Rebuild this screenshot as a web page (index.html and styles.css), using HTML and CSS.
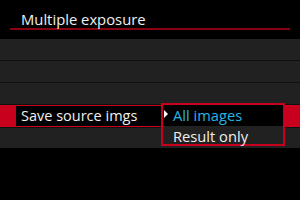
FILE: index.html
```html
<!DOCTYPE html>
<html>
<head>
<meta charset="utf-8">
<link rel="stylesheet" href="styles.css">
</head>
<body>
<div class="screen">
  <div class="header">
    <div class="title">Multiple exposure</div>
  </div>
  <div class="menu">
    <div class="row"></div>
    <div class="row"></div>
    <div class="row"></div>
    <div class="row selected">
      <div class="label">Save source imgs</div>
    </div>
    <div class="row"></div>
  </div>
  <div class="dropdown">
    <div class="opt active"><span class="marker"></span>All images</div>
    <div class="opt">Result only</div>
  </div>
</div>
</body>
</html>
```
FILE: styles.css
```css
html, body {
  margin: 0;
  padding: 0;
  background: #000;
}
.screen {
  position: relative;
  width: 300px;
  height: 200px;
  background: #000;
  overflow: hidden;
  font-family: "Open Sans", "Noto Sans", sans-serif;
  color: #f0f0f0;
}
.header {
  height: 39px;
  padding: 0 10px;
  box-sizing: border-box;
}
.title {
  height: 18px;
  padding-top: 10px;
  padding-left: 11px;
  line-height: 18px;
  font-size: 14.8px;
  border-bottom: 2px solid #8a0010;
}
.menu {
  display: flex;
  flex-direction: column;
  gap: 1px;
  background: #101010;
}
.row {
  height: 21px;
  background: #212121;
}
.row.selected {
  height: 22px;
  background: #c8001e;
  display: flex;
  padding: 1px 15px 1px 16px;
  box-sizing: border-box;
}
.label {
  flex: 1;
  background: #000;
  padding-left: 5px;
  font-size: 14.5px;
  line-height: 20px;
}
.menu .row:last-child {
  height: 20px;
}
.dropdown {
  position: absolute;
  left: 161px;
  top: 103px;
  width: 124px;
  height: 43px;
  border: 2px solid #c8001e;
  box-sizing: border-box;
  background: #212121;
  font-size: 14.7px;
}
.opt {
  height: 20px;
  line-height: 20px;
  padding-left: 10px;
  position: relative;
}
.opt.active {
  background: #000;
  color: #27b4e4;
  height: 21px;
}
.marker {
  position: absolute;
  left: 1px;
  top: 5px;
  width: 0;
  height: 0;
  border-top: 4.5px solid transparent;
  border-bottom: 4.5px solid transparent;
  border-left: 4px solid #fff;
}
```
